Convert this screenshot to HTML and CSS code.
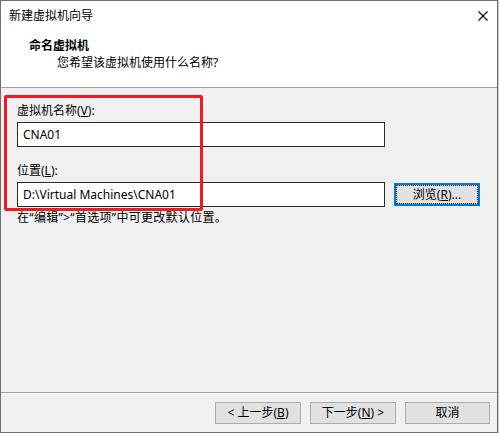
FILE: index.html
```html
<!DOCTYPE html>
<html lang="zh-CN">
<head>
<meta charset="utf-8">
<title>新建虚拟机向导</title>
<link rel="stylesheet" href="styles.css">
</head>
<body>
<div class="window">
  <div class="titlebar">
    <span class="title">新建虚拟机向导</span>
    <svg class="close" width="10" height="10" viewBox="0 0 10 10"><path d="M0.5 0.5 L9.5 9.5 M9.5 0.5 L0.5 9.5" stroke="#000" stroke-width="1.1" fill="none"/></svg>
  </div>
  <div class="header">
    <div class="h-title">命名虚拟机</div>
    <div class="h-sub">您希望该虚拟机使用什么名称?</div>
  </div>
  <div class="content">
    <div class="label">虚拟机名称(<u>V</u>):</div>
    <div class="field">CNA01</div>
    <div class="label second">位置(<u>L</u>):</div>
    <div class="row">
      <div class="field">D:\Virtual Machines\CNA01</div>
      <button class="btn focus">浏览(<u>R</u>)...</button>
    </div>
    <div class="note">在“编辑”&gt;“首选项”中可更改默认位置。</div>
  </div>
  <div class="footer">
    <button class="btn">&lt; 上一步(<u>B</u>)</button>
    <button class="btn">下一步(<u>N</u>) &gt;</button>
    <button class="btn">取消</button>
  </div>
  <div class="highlight"></div>
</div>
</body>
</html>
```
FILE: styles.css
```css
* { box-sizing: border-box; }
html, body { margin: 0; padding: 0; }
body {
  width: 499px;
  height: 433px;
  background: #c9c9c9;
  font-family: "Noto Sans", "Noto Sans CJK SC", sans-serif;
  font-size: 12px;
  line-height: 16px;
  color: #000;
  overflow: hidden;
}
.window {
  position: relative;
  width: 498px;
  height: 433px;
  border: 1px solid #6f6f6f;
  display: flex;
  flex-direction: column;
  background: #f0f0f0;
}
.titlebar {
  height: 29px;
  background: #fff;
  display: flex;
  align-items: center;
  justify-content: space-between;
  padding: 0 9px 0 8px;
}
.close { display: block; margin-top: 1px; }
.header {
  background: #fff;
  padding: 8px 0 16px 28px;
  border-bottom: 1px solid #a0a0a0;
}
.h-title { font-weight: bold; }
.h-sub { margin-top: 1px; padding-left: 28px; }
.content {
  flex: 1;
  padding: 15px 16px 0 16px;
}
.label { margin-bottom: 3px; }
.label.second { margin-top: 16px; }
.field {
  width: 368px;
  height: 25px;
  border: 1px solid #2b2b2b;
  background: #fff;
  padding: 0 5px;
  line-height: 23px;
}
.row {
  display: flex;
  align-items: center;
  gap: 9px;
}
.note { margin-top: 3px; letter-spacing: 0.3px; }
.btn {
  font: inherit;
  color: #000;
  width: 86px;
  height: 22px;
  background: #e1e1e1;
  border: 1px solid #adadad;
  padding: 0;
  line-height: 18px;
  text-align: center;
}
.btn.focus {
  height: 23px;
  border: 2px solid #0078d7;
  outline: 1px dotted #000;
  outline-offset: -3px;
}
.footer {
  border-top: 1px solid #a0a0a0;
  box-shadow: inset 0 1px 0 #fff;
  padding: 9px 7px 8px 0;
  display: flex;
  justify-content: flex-end;
  gap: 9px;
}
.footer .btn:last-child { width: 85px; }
.highlight {
  position: absolute;
  left: 3px;
  top: 94px;
  width: 199px;
  height: 116px;
  border: 3px solid #ed1c24;
  border-radius: 2px;
}
```
